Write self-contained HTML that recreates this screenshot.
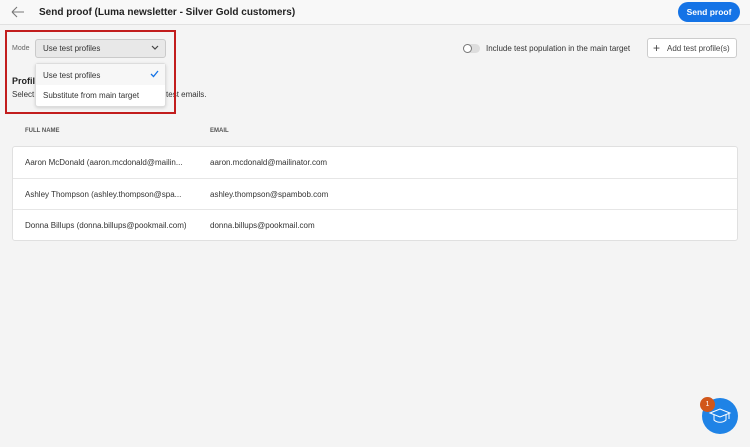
<!DOCTYPE html>
<html><head><style>
*{box-sizing:border-box;margin:0;padding:0}
body{width:750px;height:447px;background:#f4f4f4;font-family:"Liberation Sans",sans-serif;color:#2c2c2c;position:relative;overflow:hidden}
.abs{position:absolute}
.hdr{left:0;top:0;width:750px;height:25px;background:#f8f8f8;border-bottom:1px solid #e1e1e1}
.t{font-size:8px;color:#333;white-space:nowrap}
</style></head><body>
<div class="abs hdr"></div>
<svg class="abs" style="left:11px;top:6px" width="14" height="12" viewBox="0 0 14 12"><path d="M1 6H13M1 6L6 1M1 6L6 11" stroke="#777" stroke-width="1.1" fill="none"/></svg>
<div class="abs" style="left:39px;top:7px;font-size:10px;font-weight:bold;color:#222">Send proof (Luma newsletter - Silver Gold customers)</div>
<div class="abs" style="left:678px;top:2px;width:62px;height:20px;background:#1473e6;border-radius:10px;color:#fff;font-size:8.5px;font-weight:bold;text-align:center;line-height:20px">Send proof</div>

<div class="abs t" style="left:12px;top:45px;font-size:7px;color:#666">Mode</div>
<div class="abs" style="left:35px;top:39px;width:131px;height:19px;background:#e8e8e8;border:1px solid #cacaca;border-radius:3px"></div>
<div class="abs t" style="left:43px;top:44px">Use test profiles</div>
<svg class="abs" style="left:151px;top:45px" width="8" height="6"><path d="M1 1L4 4L7 1" stroke="#444" stroke-width="1.2" fill="none"/></svg>

<div class="abs" style="left:12px;top:76px;font-size:9px;font-weight:bold;color:#222">Profiles</div>
<div class="abs t" style="left:12px;top:90px">Select <span style="margin-left:110px">send test emails.</span></div>

<div class="abs" style="left:35px;top:63px;width:131px;height:44px;background:#fff;border:1px solid #ddd;border-radius:3px;box-shadow:0 1px 3px rgba(0,0,0,.15)"></div>
<div class="abs" style="left:36px;top:64px;width:129px;height:21px;background:#f7f7f7"></div>
<div class="abs t" style="left:43px;top:71px">Use test profiles</div>
<svg class="abs" style="left:150px;top:70px" width="9" height="8"><path d="M1 4L3.5 6.5L8 1" stroke="#1473e6" stroke-width="1.3" fill="none"/></svg>
<div class="abs t" style="left:43px;top:91px">Substitute from main target</div>

<div class="abs" style="left:5px;top:30px;width:171px;height:84px;border:2px solid #c21d1d"></div>

<div class="abs" style="left:463px;top:44px;width:17px;height:9px;border-radius:5px;background:#ddd"></div>
<div class="abs" style="left:463px;top:44px;width:9px;height:9px;border-radius:5px;background:#fff;border:1.3px solid #777"></div>
<div class="abs t" style="left:486px;top:44px">Include test population in the main target</div>
<div class="abs" style="left:647px;top:38px;width:90px;height:20px;background:#fff;border:1px solid #ccc;border-radius:3px"></div>
<div class="abs" style="left:653px;top:41px;font-size:12px;color:#444">+</div>
<div class="abs t" style="left:667px;top:44px;color:#444">Add test profile(s)</div>

<div class="abs" style="left:25px;top:128px;font-size:6px;color:#555;font-weight:bold">FULL NAME</div>
<div class="abs" style="left:210px;top:128px;font-size:6px;color:#555;font-weight:bold">EMAIL</div>
<div class="abs" style="left:12px;top:146px;width:726px;height:95px;background:#fff;border:1px solid #e0e0e0;border-radius:3px"></div>
<div class="abs" style="left:13px;top:178px;width:724px;height:1px;background:#e6e6e6"></div>
<div class="abs" style="left:13px;top:209px;width:724px;height:1px;background:#e6e6e6"></div>
<div class="abs t" style="left:25px;top:158px">Aaron McDonald (aaron.mcdonald@mailin...</div>
<div class="abs t" style="left:210px;top:158px">aaron.mcdonald@mailinator.com</div>
<div class="abs t" style="left:25px;top:190px">Ashley Thompson (ashley.thompson@spa...</div>
<div class="abs t" style="left:210px;top:190px">ashley.thompson@spambob.com</div>
<div class="abs t" style="left:25px;top:221px">Donna Billups (donna.billups@pookmail.com)</div>
<div class="abs t" style="left:210px;top:221px">donna.billups@pookmail.com</div>

<div class="abs" style="left:702px;top:398px;width:36px;height:36px;border-radius:50%;background:#1f83e6"></div>
<svg class="abs" style="left:708px;top:405px" width="24" height="22" viewBox="0 0 24 22"><path d="M2 8L12 4L22 8L12 12Z M6 10V15C9 18 15 18 18 15V10 M21 8V14" stroke="#fff" stroke-width="1" fill="none"/></svg>
<div class="abs" style="left:700px;top:397px;width:15px;height:15px;border-radius:50%;background:#d1571a;color:#fff;font-size:7px;text-align:center;line-height:15px">1</div>
</body></html>
